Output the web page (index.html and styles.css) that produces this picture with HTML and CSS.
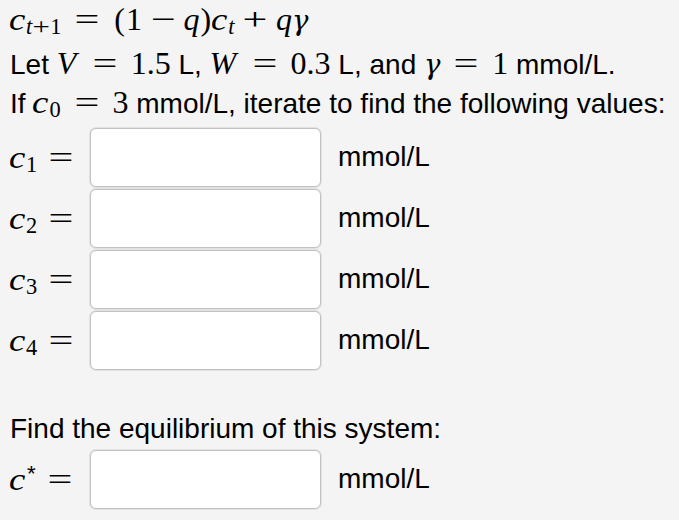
FILE: index.html
```html
<!DOCTYPE html>
<html>
<head>
<meta charset="utf-8">
<link rel="stylesheet" href="styles.css">
</head>
<body>
<div class="q">
  <div class="line l1"><span class="m"><i class="c">c</i><sub><i>t</i><span class="sb"><span class="g">+</span></span>1</sub><span class="rel"><span class="g">=</span></span><span class="p">(</span>1<span class="bin"><span class="g">−</span></span><i>q</i><span class="p">)</span><i class="c">c</i><sub><i>t</i></sub><span class="bin"><span class="g">+</span></span><i>q</i><i class="gm">γ</i></span></div>
  <div class="line l2">Let <span class="m"><i class="v">V</i><span class="rel"><span class="g">=</span></span>1.5</span> L, <span class="m"><i class="v">W</i><span class="rel"><span class="g">=</span></span>0.3</span> L, and <span class="m"><i class="gm">γ</i><span class="rel"><span class="g">=</span></span>1</span> mmol/L.</div>
  <div class="line l3">If <span class="m"><i class="c">c</i><sub>0</sub><span class="rel"><span class="g">=</span></span>3</span> mmol/L, iterate to find the following values:</div>
  <div class="rows">
    <div class="row"><span class="lab m"><i class="c">c</i><sub>1</sub><span class="rel rs"><span class="g">=</span></span></span><input class="box" type="text"><span class="unit">mmol/L</span></div>
    <div class="row"><span class="lab m"><i class="c">c</i><sub>2</sub><span class="rel rs"><span class="g">=</span></span></span><input class="box" type="text"><span class="unit">mmol/L</span></div>
    <div class="row"><span class="lab m"><i class="c">c</i><sub>3</sub><span class="rel rs"><span class="g">=</span></span></span><input class="box" type="text"><span class="unit">mmol/L</span></div>
    <div class="row"><span class="lab m"><i class="c">c</i><sub>4</sub><span class="rel rs"><span class="g">=</span></span></span><input class="box" type="text"><span class="unit">mmol/L</span></div>
  </div>
  <div class="line l4">Find the equilibrium of this system:</div>
  <div class="row"><span class="lab m"><i class="c">c</i><sup>*</sup><span class="rel rs"><span class="g">=</span></span></span><input class="box" type="text"><span class="unit">mmol/L</span></div>
</div>
</body>
</html>
```
FILE: styles.css
```css
html, body {
  margin: 0;
  padding: 0;
  background: #f4f4f4;
}
body {
  font-family: "Liberation Sans", Arial, sans-serif;
  font-size: 28px;
  color: #000;
}
.q {
  padding-left: 10px;
}
.line {
  white-space: nowrap;
}
.l1 { height: 46px; line-height: 42px; }
.l2 { height: 38px; line-height: 38px; }
.l3 { height: 40px; line-height: 40px; }
.l4 { height: 40px; line-height: 40px; margin-top: 38px; }
.rows {
  margin-top: 3px;
}
.m {
  font-family: "Liberation Serif", "Times New Roman", serif;
  font-size: 32px;
  line-height: 1;
}
.m i {
  font-style: italic;
}
.m .c {
  display: inline-block;
  transform: scaleX(1.15);
  margin-right: 0.06em;
}
.m .v {
  margin-right: 0.08em;
}
.m .gm {
  font-family: "DejaVu Serif", serif;
  font-size: 0.86em;
}
.m .p {
  margin: 0 0.03em;
}
.m sub, .m sup {
  font-size: 0.7em;
  line-height: 0;
}
.m sub {
  vertical-align: -0.2em;
}
.m sup {
  vertical-align: 0.36em;
  font-family: "Liberation Sans", sans-serif;
  margin-left: 1px;
}
.g {
  display: inline-block;
  transform: scaleX(1.38);
}
.sb {
  margin: 0 0.12em;
}
.rel {
  display: inline-block;
  width: 1.62em;
  text-align: center;
}
.rel.rs {
  width: 1.5em;
}
.bin {
  display: inline-block;
  width: 1.3em;
  text-align: center;
}
.row {
  display: flex;
  align-items: center;
  height: 61px;
}
.lab {
  width: 80px;
  flex: none;
  position: relative;
  top: -1px;
}
.box {
  box-sizing: border-box;
  width: 231px;
  height: 59px;
  margin: 0;
  padding: 0 8px;
  border: 1px solid #c2c2c2;
  border-radius: 6px;
  background: #fff;
  box-shadow: 0 0 0 1px #e2e2e2;
  font: inherit;
}
.unit {
  margin-left: 17px;
  position: relative;
  top: -1px;
}
```
